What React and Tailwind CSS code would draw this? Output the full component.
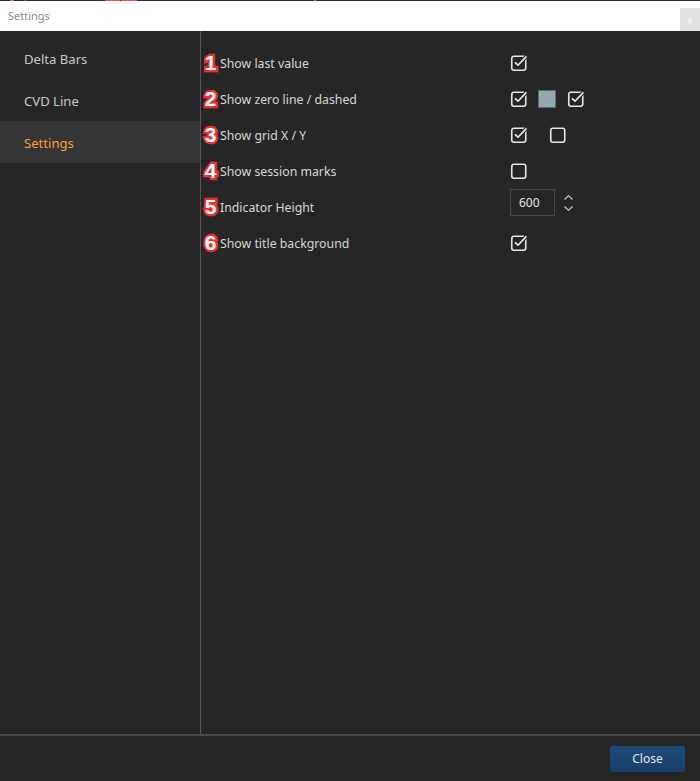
import React from "react";

function Check({ checked = true }) {
  return (
    <svg width="18" height="18" viewBox="0 0 18 18" fill="none" className="block shrink-0">
      <rect x="1.75" y="2.25" width="14" height="14" rx="2.2" stroke="#e6e6e6" strokeWidth="1.6" fill="none" />
      {checked && <path d="M5 8.4 L8 11.2 L16.4 2.4" stroke="#262626" strokeWidth="3.8" fill="none" />}
      {checked && <path d="M5 8.4 L8 11.2 L16.4 2.4" stroke="#f0f0f0" strokeWidth="1.6" fill="none" />}
    </svg>
  );
}

function Row({ n, label, children }) {
  return (
    <div className="flex items-center h-9">
      <span className="w-[19px] pb-[2px] text-center text-[21px] font-bold leading-none text-white font-['Liberation_Sans',sans-serif] [paint-order:stroke] [-webkit-text-stroke:4.5px_#ea2f38]">
        {n}
      </span>
      <span className="w-[290px] pt-[2px] text-[12.3px] text-[#d6d6d6]">{label}</span>
      <div className="flex items-center">{children}</div>
    </div>
  );
}

export default function App() {
  return (
    <div className="w-[700px] h-[781px] flex flex-col bg-[#262626] overflow-hidden font-['Noto_Sans','Open_Sans',sans-serif]">
      <div className="h-px bg-[#2a2e39] relative shrink-0">
        <span className="absolute left-[10px] top-0 h-px w-[4px] bg-[#ef5350]" />
        <span className="absolute left-[25px] top-0 h-px w-px bg-[#7fb77f]" />
        <span className="absolute left-[105px] top-0 h-px w-[15px] bg-[#ef5350]" />
        <span className="absolute left-[121px] top-0 h-px w-[16px] bg-[#ef5350]" />
        <span className="absolute left-[314px] top-0 h-px w-[2px] bg-[#22dd22]" />
      </div>
      <div className="h-[30px] bg-white flex items-center justify-between shrink-0">
        <span className="pl-2 text-[11px] text-[#8f8f8f]">Settings</span>
        <div className="w-[20px] h-[23px] mt-[7px] bg-[#e2e2e2] flex items-center justify-center text-[10px] font-bold leading-none text-[#f2f2f2]">x</div>
      </div>
      <div className="flex flex-1 min-h-0">
        <aside className="w-[201px] shrink-0 border-r border-[#555555] pt-[6px] text-[13.1px]">
          <div className="h-[42px] flex items-center pl-6 pt-[4px] text-[#c8c8c8]">Delta Bars</div>
          <div className="h-[42px] flex items-center pl-6 pt-[4px] text-[#c8c8c8]">CVD Line</div>
          <div className="h-[42px] flex items-center pl-6 pt-[4px] bg-[#353535] text-[#ff9d3c]">Settings</div>
        </aside>
        <main className="flex-1 pt-[14px]">
          <Row n="1" label="Show last value"><Check /></Row>
          <Row n="2" label="Show zero line / dashed">
            <Check />
            <div className="ml-[10px] w-[18px] h-[18px] bg-[#94a8b0] border border-[#5d6b70]" />
            <div className="ml-[11px]"><Check /></div>
          </Row>
          <Row n="3" label="Show grid X / Y">
            <Check />
            <div className="ml-[21px]"><Check checked={false} /></div>
          </Row>
          <Row n="4" label="Show session marks"><Check checked={false} /></Row>
          <Row n="5" label="Indicator Height">
            <div className="flex items-center mb-[9px]">
              <div className="w-[45px] h-[27px] border border-[#464646] flex items-center pl-2 text-xs text-[#e8e8e8]">600</div>
              <div className="ml-[9px] flex flex-col gap-[6px]">
                <svg width="9" height="5" viewBox="0 0 9 5" fill="none"><path d="M0.5 4.5 L4.5 0.7 L8.5 4.5" stroke="#d8d8d8" strokeWidth="1.1" /></svg>
                <svg width="9" height="5" viewBox="0 0 9 5" fill="none"><path d="M0.5 0.5 L4.5 4.3 L8.5 0.5" stroke="#d8d8d8" strokeWidth="1.1" /></svg>
              </div>
            </div>
          </Row>
          <Row n="6" label="Show title background"><Check /></Row>
        </main>
      </div>
      <div className="h-[47px] shrink-0 border-t-2 border-[#4a4a4a] flex items-start justify-end pt-[10px] pr-[15px]">
        <button className="w-[75px] h-[26px] rounded-[2px] bg-gradient-to-b from-[#1c4a7c] to-[#1a3f68] text-xs text-[#e4e4e4]">Close</button>
      </div>
    </div>
  );
}
